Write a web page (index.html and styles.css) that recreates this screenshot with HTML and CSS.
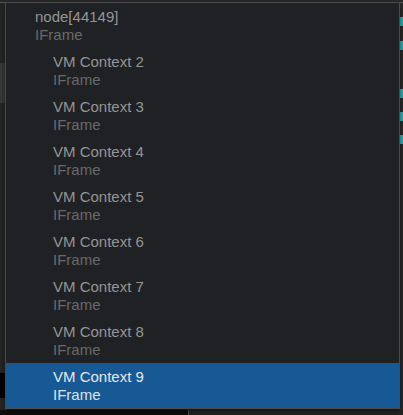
FILE: index.html
```html
<!DOCTYPE html>
<html>
<head>
<meta charset="utf-8">
<link rel="stylesheet" href="styles.css">
</head>
<body>
<div class="backdrop">
  <div class="top-strip"></div>
  <div class="middle">
    <div class="left-strip">
      <div class="ls-a"></div>
      <div class="ls-b"></div>
      <div class="ls-c"></div>
      <div class="ls-d"></div>
      <div class="ls-e"></div>
    </div>
    <div class="center"></div>
    <div class="right-strip">
      <span class="mark m1"></span>
      <span class="mark m2"></span>
      <span class="mark m3"></span>
      <span class="mark m4"></span>
      <span class="mark m5"></span>
    </div>
  </div>
  <div class="bottom-strip">
    <div class="bs-left"></div>
    <div class="bs-right"></div>
  </div>
</div>

<div class="popup">
  <div class="row root"><div class="title">node[44149]</div><div class="sub">IFrame</div></div>
  <div class="row child"><div class="title">VM Context 2</div><div class="sub">IFrame</div></div>
  <div class="row child"><div class="title">VM Context 3</div><div class="sub">IFrame</div></div>
  <div class="row child"><div class="title">VM Context 4</div><div class="sub">IFrame</div></div>
  <div class="row child"><div class="title">VM Context 5</div><div class="sub">IFrame</div></div>
  <div class="row child"><div class="title">VM Context 6</div><div class="sub">IFrame</div></div>
  <div class="row child"><div class="title">VM Context 7</div><div class="sub">IFrame</div></div>
  <div class="row child"><div class="title">VM Context 8</div><div class="sub">IFrame</div></div>
  <div class="row child selected"><div class="title">VM Context 9</div><div class="sub">IFrame</div></div>
</div>
</body>
</html>
```
FILE: styles.css
```css
html, body {
  margin: 0;
  padding: 0;
  width: 403px;
  height: 415px;
  overflow: hidden;
  background: #1e1e1f;
  font-family: "Liberation Sans", Arial, sans-serif;
}

.backdrop {
  display: flex;
  flex-direction: column;
  width: 403px;
  height: 415px;
}

.top-strip {
  height: 3px;
  background: #2a2a2b;
  border-bottom: 1px solid #555;
  box-sizing: border-box;
}

.middle {
  flex: 1;
  display: flex;
}

.left-strip {
  width: 5px;
  display: flex;
  flex-direction: column;
  background: #262627;
  border-right: 1px solid #3a3a3a;
}
.ls-a { height: 60px; }
.ls-b { height: 40px; background: #3a3a3b; }
.ls-c { height: 270px; }
.ls-d { height: 25px; background: #000; }
.ls-e { flex: 1; }

.center { flex: 1; background: #202124; }

.right-strip {
  width: 3px;
  display: flex;
  flex-direction: column;
  background: #2a2a2b;
}
.mark {
  display: block;
  height: 9px;
  background: #2bb3b0;
  margin-top: 10px;
}
.m1 { margin-top: 14px; }
.m2 { margin-top: 15px; }
.m3 { margin-top: 39px; }
.m4 { margin-top: 14px; }
.m5 { margin-top: 14px; }

.bottom-strip {
  height: 5px;
  display: flex;
}
.bs-left { width: 188px; background: #0d0d0d; border-right: 1px solid #555; }
.bs-right { flex: 1; background: #242424; }

.popup {
  position: absolute;
  left: 5px;
  top: 2px;
  width: 395px;
  background: #202124;
  border: 1px solid #4b4b4d;
  box-sizing: border-box;
  box-shadow: 0 2px 6px rgba(0,0,0,0.5);
}

.row {
  height: 45px;
  box-sizing: border-box;
  padding-top: 5px;
  font-size: 15px;
  line-height: 18px;
}
.row.root { padding-left: 29px; }
.row.child { padding-left: 47px; }

.title { color: #959596; white-space: nowrap; }
.sub { color: #69696a; white-space: nowrap; }

.row.selected { background: #175995; }
.row.selected .title { color: #e6e8ea; }
.row.selected .sub { color: #dfe3e8; }
```
